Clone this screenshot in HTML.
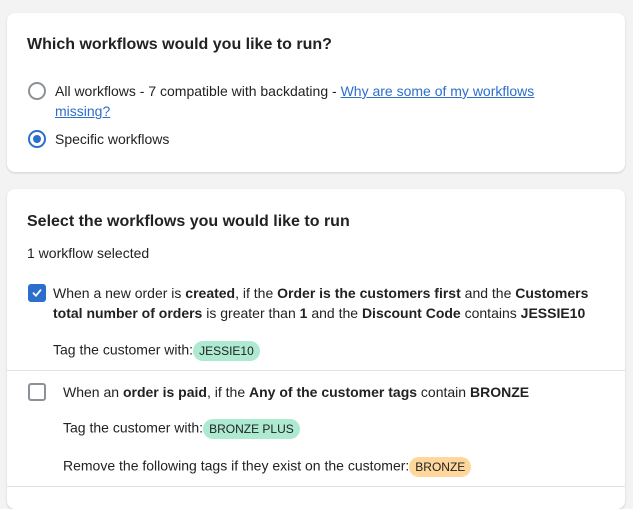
<!DOCTYPE html>
<html><head><style>
body{margin:0;background:#f3f3f3;font-family:"Liberation Sans",sans-serif;color:#202223;font-size:14px;width:633px;height:495px;overflow:hidden;position:relative}
.card{position:absolute;left:7px;width:618px;background:#fff;border-radius:8px;box-shadow:0 1px 2px rgba(0,0,0,.15)}
.abs{position:absolute;white-space:nowrap}
h2{margin:0;font-size:16px;font-weight:600;position:absolute}
.radio{position:absolute;width:14px;height:14px;border:2px solid #8c9196;border-radius:50%}
.radio.on{border-color:#2c6ecb}
.radio.on:after{content:"";position:absolute;left:3px;top:3px;width:8px;height:8px;border-radius:50%;background:#2c6ecb}
a{color:#2c6ecb;text-decoration:underline}
.cb{position:absolute;width:14px;height:14px;border:2px solid #8c9196;border-radius:3px}
.cb.on{background:#2c6ecb;border-color:#2c6ecb}
b{font-weight:700}
.tag{display:inline-block;border-radius:10px;padding:0 6px;font-size:12px;line-height:20px;vertical-align:middle}
.g{background:#aee9d1}.o{background:#ffd79d}
.div{position:absolute;left:0;width:618px;height:1px;background:#e1e3e5}
</style></head><body>
<div class="card" style="top:13px;height:159px">
 <h2 style="left:20px;top:23px">Which workflows would you like to run?</h2>
 <div class="radio" style="left:21px;top:69px"></div>
 <div class="abs" style="left:48px;top:68px;line-height:20px">All workflows - 7 compatible with backdating - <a>Why are some of my workflows</a><br><a>missing?</a></div>
 <div class="radio on" style="left:21px;top:117px"></div>
 <div class="abs" style="left:48px;top:116px;line-height:20px">Specific workflows</div>
</div>
<div class="card" style="top:189px;height:320px">
 <h2 style="left:20px;top:24px">Select the workflows you would like to run</h2>
 <div class="abs" style="left:20px;top:56px">1 workflow selected</div>
 <div class="cb on" style="left:21px;top:95px"><svg width="14" height="14" viewBox="0 0 14 14" style="position:absolute;left:0;top:0"><path d="M3.5 7.2l2.4 2.6 4.6-5.6" fill="none" stroke="#fff" stroke-width="1.8" stroke-linecap="round" stroke-linejoin="round"/></svg></div>
 <div class="abs" style="left:46px;top:94px;line-height:20px">When a new order is <b>created</b>, if the <b>Order is the customers first</b> and the <b>Customers</b><br><b>total number of orders</b> is greater than <b>1</b> and the <b>Discount Code</b> contains <b>JESSIE10</b></div>
 <div class="abs" style="left:46px;top:152px">Tag the customer with:<span class="tag g">JESSIE10</span></div>
 <div class="div" style="top:181px"></div>
 <div class="cb" style="left:21px;top:194px"></div>
 <div class="abs" style="left:56px;top:195px">When an <b>order is paid</b>, if the <b>Any of the customer tags</b> contain <b>BRONZE</b></div>
 <div class="abs" style="left:56px;top:230px">Tag the customer with:<span class="tag g">BRONZE PLUS</span></div>
 <div class="abs" style="left:56px;top:268px">Remove the following tags if they exist on the customer:<span class="tag o">BRONZE</span></div>
 <div class="div" style="top:297px"></div>
</div>
</body></html>
